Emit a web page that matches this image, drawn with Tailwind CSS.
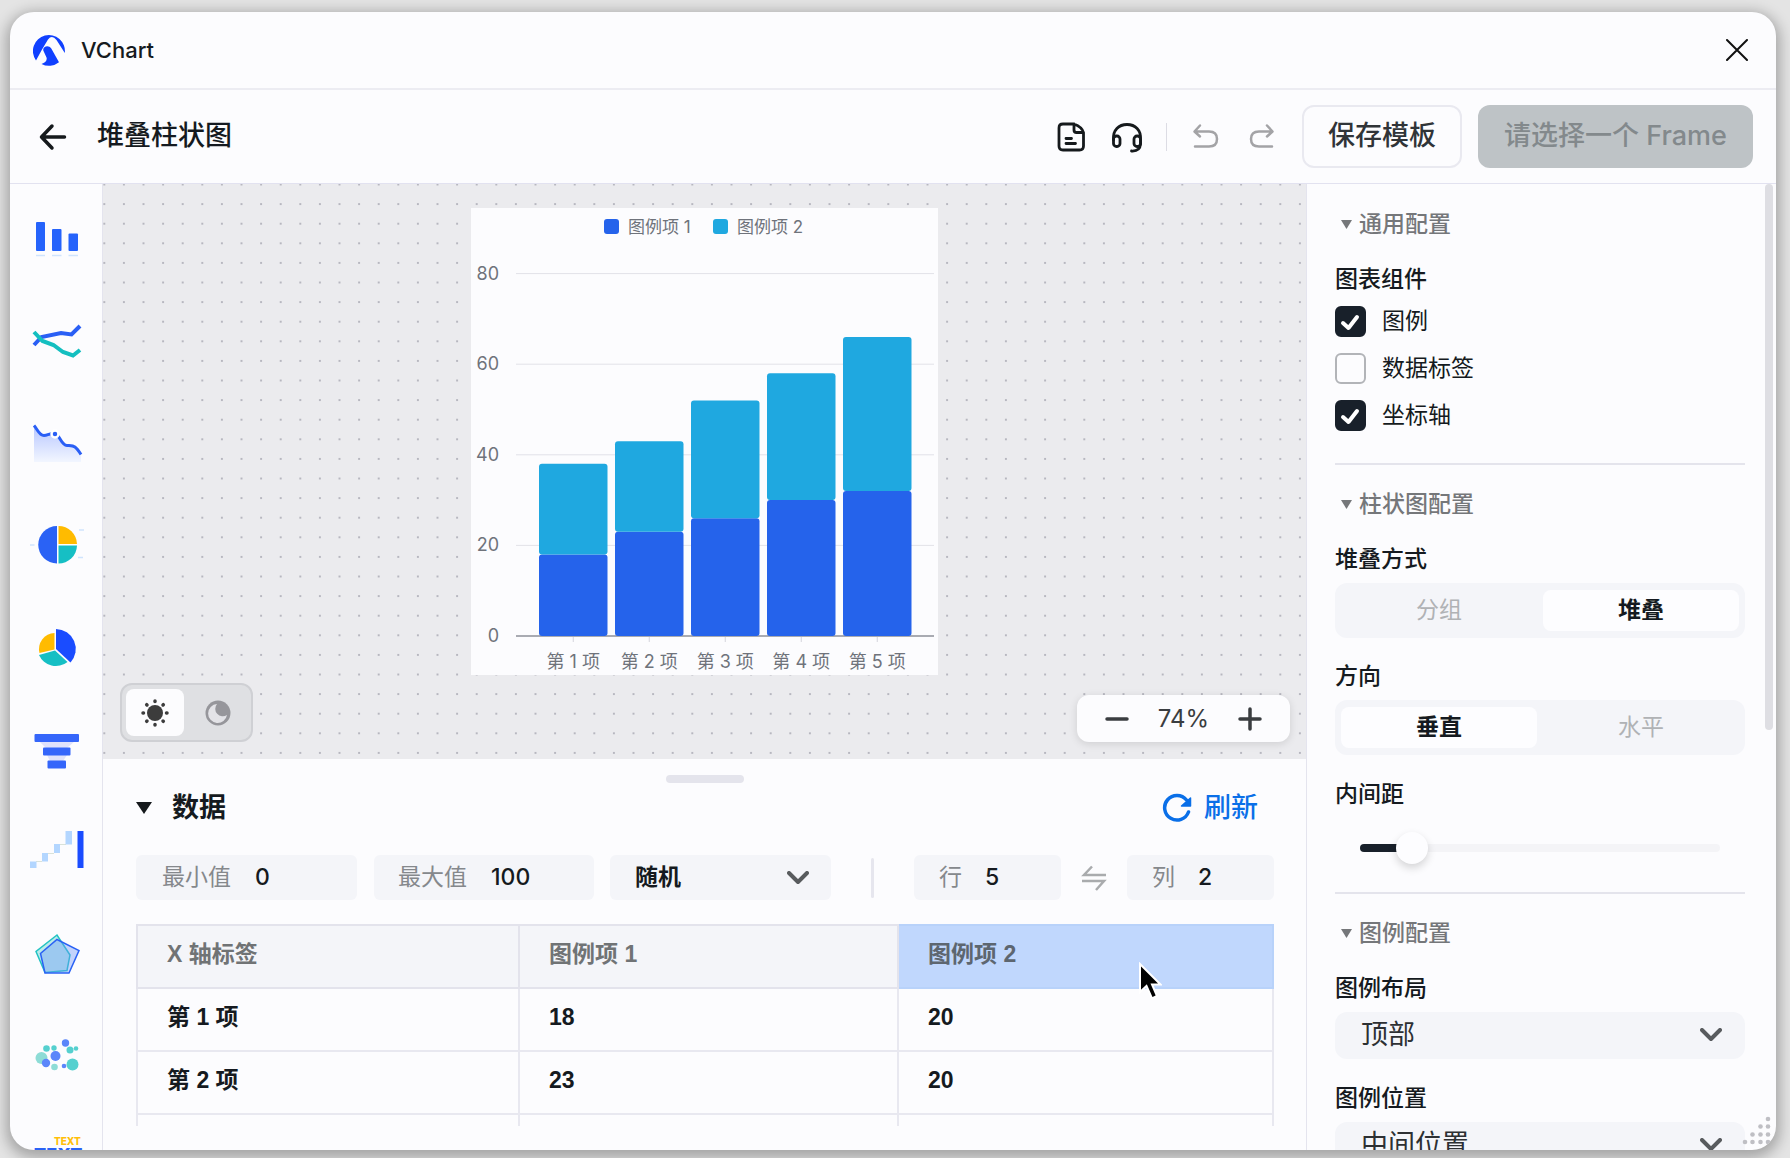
<!DOCTYPE html>
<html lang="zh-CN">
<head>
<meta charset="UTF-8">
<meta name="viewport" content="width=device-width, initial-scale=1.0">
<title>VChart</title>
<script src="https://cdn.jsdelivr.net/npm/@tailwindcss/browser@4"></script>
</head>
<body class="h-screen overflow-hidden bg-[#e4e4e4] pt-3 pr-[14px] pb-2 pl-[10px] font-['Inter','Noto_Sans_CJK_SC',sans-serif] text-[23px] text-[#151a20]">
<div class="flex h-full flex-col overflow-hidden rounded-3xl bg-[#fcfcfe] shadow-[0_4px_14px_4px_rgba(0,0,0,0.28)]">

  <!-- Title bar -->
  <header class="flex h-[78px] shrink-0 items-center border-b-2 border-[#ececf2] pr-7 pl-[23px]">
    <svg class="size-8" viewBox="0 0 32 32" fill="#1040ff">
      <path d="M3 26.5A16 16 0 1 1 31.8 19L23.5 6Q19 0.5 15 5.5L9 15.5Z"/>
      <path d="M10.3 16.5C9.5 12.5 15.5 10.5 18.3 14.5L26 28.3A16 16 0 0 1 8.5 30C12 29 14.5 26.5 13.5 23.5Z"/>
    </svg>
    <h1 class="ml-4 text-[22px] font-medium">VChart</h1>
    <button type="button" aria-label="关闭" class="ml-auto">
      <svg class="size-[22px]" viewBox="0 0 22 22" fill="none" stroke="#111" stroke-width="2" stroke-linecap="round"><path d="M1 1l20 20M21 1L1 21"/></svg>
    </button>
  </header>

  <!-- Toolbar -->
  <div class="flex h-[94px] shrink-0 items-center border-b border-[#e2e2f0] pr-[23px] pl-[29px]">
    <button type="button" aria-label="返回">
      <svg class="size-7" viewBox="0 0 28 28" fill="none" stroke="#15191c" stroke-width="3.500" stroke-linecap="round" stroke-linejoin="round"><path d="M13 3L2.500 14L13 25M3 14H25.500"/></svg>
    </button>
    <h2 class="ml-[30px] text-[27px] font-medium">堆叠柱状图</h2>
    <div class="ml-auto flex items-center">
      <button type="button" aria-label="文档">
        <svg class="size-8" viewBox="0 0 32 32" fill="none" stroke="#15191c" stroke-width="2.800" stroke-linecap="round" stroke-linejoin="round"><path d="M19 3H8Q4 3 4 7V25Q4 29 8 29H24.500Q28.500 29 28.500 25V11.500Q27 6 19 3V9Q19 11.500 21.500 11.500H28M11 17.500H16.500M11 22.500H20.500"/></svg>
      </button>
      <button type="button" aria-label="客服" class="ml-6">
        <svg class="size-8" viewBox="0 0 32 32" fill="none" stroke="#15191c" stroke-width="2.800" stroke-linecap="round" stroke-linejoin="round"><path d="M2.500 19C1.500 9 8 3.500 16 3.500S30.500 9 29.500 19V23Q29 30.500 20.500 30"/><rect x="2.500" y="15" width="6.500" height="10.500" rx="3"/><rect x="23" y="15" width="6.500" height="10.500" rx="3"/></svg>
      </button>
      <span class="ml-[23px] h-7 w-px bg-[#dcdce4]"></span>
      <button type="button" aria-label="撤销" class="ml-[23px]">
        <svg class="size-8" viewBox="0 0 32 32" fill="none" stroke="#a3a3a6" stroke-width="2.500" stroke-linecap="round" stroke-linejoin="round"><path d="M10 4.500L4.500 10.500L10 15.500M5 10.500H19Q27 10.500 27 18T19 25.500H5"/></svg>
      </button>
      <button type="button" aria-label="重做" class="ml-6">
        <svg class="size-8" viewBox="0 0 32 32" fill="none" stroke="#a3a3a6" stroke-width="2.500" stroke-linecap="round" stroke-linejoin="round"><path d="M21 4.500L26.500 10.500L21 15.500M26 10.500H13Q5 10.500 5 18T13 25.500H26"/></svg>
      </button>
      <button type="button" class="ml-6 h-[63px] w-[160px] rounded-xl border-2 border-[#e9e9f0] text-[27px] font-medium text-[#303438]">保存模板</button>
      <button type="button" disabled class="ml-4 h-[63px] w-[275px] rounded-xl bg-[#bec3c6] text-[27px] font-medium text-[#83898c]">请选择一个 Frame</button>
    </div>
  </div>

  <div class="flex min-h-0 flex-1">

    <!-- Chart types -->
    <nav class="w-[93px] shrink-0 overflow-hidden border-r border-[#e4e4ee] pt-1 pl-[2px]">
      <button type="button" aria-label="柱状图" class="flex h-[102px] w-full items-center justify-center">
        <svg class="size-14" viewBox="0 0 56 56"><g fill="#2563fb"><rect x="7" y="11" width="9" height="29" rx="1"/><rect x="23" y="18" width="9.500" height="22" rx="1"/><rect x="39.500" y="22.500" width="9.500" height="17.500" rx="1"/></g><path d="M7 44.500H16M23 44.500H32.500M39.500 44.500H49" stroke="#cfe4fd" stroke-width="1.500"/></svg>
      </button>
      <button type="button" aria-label="折线图" class="flex h-[102px] w-full items-center justify-center">
        <svg class="size-14" viewBox="0 0 56 56" fill="none" stroke-width="4"><path d="M5 32L12.500 24L32 20L42.500 21.500L51 13" stroke="#2a5ff5"/><path d="M5 19L13.500 28L24.500 32L34 39L44 42.500L51 37" stroke="#14bfc0"/></svg>
      </button>
      <button type="button" aria-label="面积图" class="flex h-[102px] w-full items-center justify-center">
        <svg class="size-14" viewBox="0 0 56 56">
          <defs><linearGradient id="areaFill" x1="0" y1="0" x2="0" y2="1"><stop offset="0" stop-color="#b9c8ff"/><stop offset="1" stop-color="#f2f6ff"/></linearGradient></defs>
          <path d="M5 12C9 17 10 21 15 21C20 21 20 18 26 18.500C31 20 32 30 38 30.500C46 31 46 30 52 40V47H5Z" fill="url(#areaFill)"/>
          <path d="M5 10.500C9 15 10 20.500 15 20.500C19 20.500 19 18.500 26 18.500C31 20 32 30 38 30.500C45 31 46 30 52 39.500" fill="none" stroke="#2a5ff5" stroke-width="3"/>
          <circle cx="26" cy="19" r="3.500" fill="#2a5ff5" stroke="#fff" stroke-width="2.500"/>
        </svg>
      </button>
      <button type="button" aria-label="饼图" class="flex h-[102px] w-full items-center justify-center">
        <svg class="size-14" viewBox="0 0 56 56"><path d="M28 9A18.700 18.700 0 0 0 28 46.500Z" fill="#2a62f5"/><path d="M29.500 9A18.500 18.500 0 0 1 48 27H29.500Z" fill="#ffbb00"/><path d="M29.500 28.500H48A18.500 18.500 0 0 1 29.500 46.500Z" fill="#16bfc4"/><path d="M1 28H5.500M50 13H55M49 40.500H54" stroke="#cfe4fd" stroke-width="1.500"/></svg>
      </button>
      <button type="button" aria-label="玫瑰图" class="flex h-[102px] w-full items-center justify-center">
        <svg class="size-14" viewBox="0 0 56 56"><path d="M27 10A20 20 0 0 1 41.500 43.500L27 30Z" fill="#1a4cff"/><path d="M25.500 14V30.500L10.500 34A16 16 0 0 1 25.500 14Z" fill="#ffbb00"/><path d="M26 31.500L38.500 43A18.500 18.500 0 0 1 10 36Z" fill="#16bfc4"/></svg>
      </button>
      <button type="button" aria-label="漏斗图" class="flex h-[102px] w-full items-center justify-center">
        <svg class="size-14" viewBox="0 0 56 56"><path d="M10 20H46L38 27H17ZM18 34H38L34 40H21Z" fill="#dfe2fb"/><g fill="#3566fa"><rect x="5.500" y="13" width="44.500" height="8" rx="1"/><rect x="14" y="26.500" width="27.500" height="8" rx="1"/><rect x="18.500" y="39.500" width="18.500" height="8" rx="1"/></g></svg>
      </button>
      <button type="button" aria-label="瀑布图" class="flex h-[102px] w-full items-center justify-center">
        <svg class="size-14" viewBox="0 0 56 56"><path d="M7 38.500H13M19 30.500H25M31 21.500H37" stroke="#d9e2d9" stroke-width="1"/><g fill="#b3d6ff"><rect x="1" y="38.500" width="6.500" height="6.500"/><rect x="13" y="30" width="6" height="8.500"/><rect x="25" y="21" width="6" height="9"/><rect x="36.500" y="8" width="6.500" height="13.500"/></g><rect x="48.500" y="8" width="6" height="37" fill="#1a4cff"/></svg>
      </button>
      <button type="button" aria-label="雷达图" class="flex h-[102px] w-full items-center justify-center">
        <svg class="size-14" viewBox="0 0 56 56" stroke-width="1.500"><path d="M28 10L7 26.500L16 47.500L38 45.500L41 30Z" fill="#8fe0dc" fill-opacity=".6" stroke="#22c3c3"/><path d="M28 14.500L50 25.500L40 48H16L11.500 28.500Z" fill="#6f96fb" fill-opacity=".4" stroke="#2a62f5"/></svg>
      </button>
      <button type="button" aria-label="散点图" class="flex h-[102px] w-full items-center justify-center">
        <svg class="size-14" viewBox="0 0 56 56"><g fill="#55d0cf"><circle cx="12.500" cy="31" r="6" fill="#8ddcd6"/><circle cx="17.500" cy="21.500" r="3.300"/><circle cx="25" cy="21" r="2.700"/><circle cx="41" cy="23" r="3.500"/><circle cx="47" cy="21.500" r="2.300"/><circle cx="43.500" cy="37.500" r="6"/><circle cx="25.500" cy="40" r="3.300" fill="#8ddcd6"/></g><g fill="#5b86fa"><circle cx="36.500" cy="16" r="3.700"/><circle cx="26.500" cy="29" r="5"/><circle cx="17" cy="36" r="4.200"/><circle cx="35" cy="39" r="2.300"/></g></svg>
      </button>
      <button type="button" aria-label="词云" class="flex h-[102px] w-full items-center justify-center">
        <svg class="size-14" viewBox="0 0 56 56" font-family="Inter, sans-serif" font-weight="800"><text x="25" y="16" font-size="10" fill="#ffbf0a">TEXT</text><text x="5" y="32" font-size="18" fill="#2a62f5">TEXT</text></svg>
      </button>
    </nav>

    <main class="flex min-w-0 flex-1 flex-col">
      <!-- Canvas -->
      <section class="relative min-h-0 flex-1 bg-[#ebebee] pt-6">
        <svg class="absolute inset-0 size-full">
          <defs><pattern id="dots" x="-8.500" y="-9.300" width="19.600" height="19.600" patternUnits="userSpaceOnUse"><circle cx="9.800" cy="9.800" r="1" fill="#a6a6b0"/></pattern></defs>
          <rect width="100%" height="100%" fill="url(#dots)"/>
        </svg>
        <svg class="relative mx-auto size-[467px] bg-[#fcfcfe]" viewBox="0 0 467 467" font-family="Inter, 'Noto Sans CJK SC', sans-serif" font-size="18" fill="#6f737b">
          <rect x="133" y="11" width="15" height="15" rx="3" fill="#2563eb"/>
          <text x="157" y="25" font-size="17">图例项 1</text>
          <rect x="242" y="11" width="15" height="15" rx="3" fill="#1fa8e0"/>
          <text x="266" y="25" font-size="17">图例项 2</text>
          <g id="plot"></g>
        </svg>

        <div class="absolute bottom-[17px] left-[17px] flex h-[59px] w-[133px] rounded-xl border-2 border-[#cfd0d4] bg-[#dfe0e3] p-1">
          <button type="button" aria-label="浅色" class="flex w-[58px] items-center justify-center rounded-lg bg-[#fcfcfe]">
            <svg class="size-7" viewBox="0 0 28 28" fill="#3c3c3c" stroke="#3c3c3c" stroke-width="3.500" stroke-linecap="round"><circle cx="14" cy="14" r="8" stroke="none"/><path d="M14 2V2.500M14 25.500V26M2 14H2.500M25.500 14H26M5.700 5.700L6 6M22 22L22.300 22.300M5.700 22.300L6 22M22 6L22.300 5.700"/></svg>
          </button>
          <button type="button" aria-label="深色" class="flex flex-1 items-center justify-center pl-1">
            <svg class="size-[26px]" viewBox="0 0 26 26"><circle cx="13" cy="13" r="12.500" fill="#96969b"/><path d="M12 4A9.500 9.500 0 1 0 22 15A7.500 7.500 0 0 1 12 4Z" fill="#e3e3e7"/></svg>
          </button>
        </div>

        <div class="absolute right-4 bottom-[17px] flex h-[47px] w-[213px] items-center justify-between rounded-xl bg-[#fcfcfe] px-7 text-2xl text-[#3a3d40] shadow-[0_2px_8px_rgba(0,0,0,0.12)]">
          <button type="button" aria-label="缩小"><svg class="size-6" viewBox="0 0 24 24" stroke="#3a3d40" stroke-width="3.500" stroke-linecap="round"><path d="M2 12H22"/></svg></button>
          <span>74%</span>
          <button type="button" aria-label="放大"><svg class="size-6" viewBox="0 0 24 24" stroke="#3a3d40" stroke-width="3.500" stroke-linecap="round"><path d="M2 12H22M12 2V22"/></svg></button>
        </div>
      </section>

      <!-- Data -->
      <section class="h-[391px] shrink-0 pr-8 pl-[33px]">
        <div class="pt-4"><div class="mx-auto h-2 w-[78px] rounded-full bg-[#e4e4ec]"></div></div>
        <div class="mt-[5px] flex h-10 items-center">
          <button type="button" class="flex items-center text-[27px] font-bold">
            <svg class="mr-5 h-3 w-4" viewBox="0 0 16 12" fill="#15191c"><path d="M0 0H16L8 12Z"/></svg>数据
          </button>
          <button type="button" class="mr-4 ml-auto flex items-center gap-3 text-[27px] font-medium text-[#0a6fe8]">
            <svg class="size-[30px]" viewBox="0 0 30 30" fill="none" stroke="#0a6fe8" stroke-width="3.500" stroke-linecap="round"><path d="M26.500 19A12.300 12.300 0 1 1 24.500 7"/><path d="M28.500 5V13H19.500Z" fill="#0a6fe8" stroke-width="1.500" stroke-linejoin="round"/></svg>刷新
          </button>
        </div>
        <div class="mt-[27px] flex h-[45px] items-center">
          <label class="flex h-full w-[221px] items-center rounded-md bg-[#f4f5f9] pl-[26px] text-[#85888c]">最小值<input type="text" value="0" class="ml-6 w-20 font-medium text-[#151a20] outline-none"></label>
          <label class="ml-[17px] flex h-full w-[220px] items-center rounded-md bg-[#f4f5f9] pl-6 text-[#85888c]">最大值<input type="text" value="100" class="ml-6 w-20 font-medium text-[#151a20] outline-none"></label>
          <div class="relative ml-4 h-full w-[221px]">
            <select aria-label="生成方式" class="h-full w-full appearance-none rounded-md bg-[#f4f5f9] pl-[25px] font-bold"><option>随机</option></select>
            <svg class="pointer-events-none absolute top-4 right-[22px] h-[14px] w-[22px]" viewBox="0 0 22 14" fill="none" stroke="#585b5e" stroke-width="4" stroke-linecap="round" stroke-linejoin="round"><path d="M2 2L11 11L20 2"/></svg>
          </div>
          <span class="mx-auto h-10 w-[3px] rounded-full bg-[#e6e6ee]"></span>
          <label class="flex h-full w-[147px] items-center rounded-md bg-[#f4f5f9] pl-[25px] text-[#85888c]">行<input type="text" value="5" class="ml-[23px] w-12 font-medium text-[#151a20] outline-none"></label>
          <button type="button" aria-label="行列转置" class="mx-5">
            <svg class="size-[26px]" viewBox="0 0 26 26" fill="none" stroke="#a9abad" stroke-width="2.500"><path d="M25 10H3L11 1.500M1 16H23L15 25"/></svg>
          </button>
          <label class="flex h-full w-[147px] items-center rounded-md bg-[#f4f5f9] pl-[25px] text-[#85888c]">列<input type="text" value="2" class="ml-[23px] w-12 font-medium text-[#151a20] outline-none"></label>
        </div>
        <div class="mt-6 h-[202px] overflow-hidden">
          <table class="w-full table-fixed border-collapse font-['Liberation_Sans','Noto_Sans_CJK_SC',sans-serif] text-left font-bold">
            <thead>
              <tr class="h-[63px] text-[#707375]">
                <th class="w-[382px] border-2 border-[#e3e3ec] bg-[#f4f5f9] px-[29px] pb-1">X 轴标签</th>
                <th class="w-[379px] border-2 border-[#e3e3ec] bg-[#f4f5f9] px-[29px] pb-1">图例项 1</th>
                <th class="relative border-2 border-[#b8d2fa] bg-[#c0d7fd] px-[29px] pb-1 text-[#5d6670]">图例项 2
                  <svg class="absolute top-9 left-[239px] z-10 h-10 w-6" viewBox="0 0 24 40"><path d="M2 2V30L8.500 24L14 36.500L19 34L14 22.500H22.500Z" fill="#000" stroke="#fff" stroke-width="2"/></svg>
                </th>
              </tr>
            </thead>
            <tbody id="rows"></tbody>
          </table>
        </div>
      </section>
    </main>

    <!-- Settings -->
    <aside class="relative w-[470px] shrink-0 overflow-hidden border-l border-[#e4e4ee] pt-[22px] pr-[31px] pl-7">
      <div class="absolute top-0 right-[3px] h-[546px] w-2 rounded-full bg-[#dedee3]"></div>

      <section>
        <h3 class="flex h-9 items-center gap-[7px] pl-[6px] font-medium text-[#75777a]"><svg class="h-[9px] w-[11px]" viewBox="0 0 11 9" fill="#75777a"><path d="M0 0H11L5.500 9Z"/></svg>通用配置</h3>
        <fieldset class="mt-[19px]">
          <legend class="h-9 leading-9 font-medium">图表组件</legend>
          <div class="flex flex-col gap-4 pt-[9px]">
            <label class="flex h-[31px] items-center gap-4">
              <span class="grid size-[31px]">
                <input type="checkbox" checked class="peer col-start-1 row-start-1 size-[31px] appearance-none rounded-md border-2 border-[#b2b4b8] checked:border-[#18202a] checked:bg-[#18202a]">
                <svg class="pointer-events-none invisible col-start-1 row-start-1 size-[31px] peer-checked:visible" viewBox="0 0 31 31" fill="none" stroke="#fff" stroke-width="4" stroke-linecap="round" stroke-linejoin="round"><path d="M8 17L13.500 22L22 11"/></svg>
              </span>图例
            </label>
            <label class="flex h-[31px] items-center gap-4">
              <span class="grid size-[31px]">
                <input type="checkbox" class="peer col-start-1 row-start-1 size-[31px] appearance-none rounded-md border-2 border-[#b2b4b8] checked:border-[#18202a] checked:bg-[#18202a]">
                <svg class="pointer-events-none invisible col-start-1 row-start-1 size-[31px] peer-checked:visible" viewBox="0 0 31 31" fill="none" stroke="#fff" stroke-width="4" stroke-linecap="round" stroke-linejoin="round"><path d="M8 17L13.500 22L22 11"/></svg>
              </span>数据标签
            </label>
            <label class="flex h-[31px] items-center gap-4">
              <span class="grid size-[31px]">
                <input type="checkbox" checked class="peer col-start-1 row-start-1 size-[31px] appearance-none rounded-md border-2 border-[#b2b4b8] checked:border-[#18202a] checked:bg-[#18202a]">
                <svg class="pointer-events-none invisible col-start-1 row-start-1 size-[31px] peer-checked:visible" viewBox="0 0 31 31" fill="none" stroke="#fff" stroke-width="4" stroke-linecap="round" stroke-linejoin="round"><path d="M8 17L13.500 22L22 11"/></svg>
              </span>坐标轴
            </label>
          </div>
        </fieldset>
      </section>

      <section class="mt-8 border-t-2 border-[#e4e4ec] pt-[21px]">
        <h3 class="flex h-9 items-center gap-[7px] pl-[6px] font-medium text-[#75777a]"><svg class="h-[9px] w-[11px]" viewBox="0 0 11 9" fill="#75777a"><path d="M0 0H11L5.500 9Z"/></svg>柱状图配置</h3>
        <h4 class="mt-[19px] h-9 leading-9 font-medium">堆叠方式</h4>
        <div class="mt-[6px] flex h-[55px] justify-between rounded-xl bg-[#f4f5f9] px-[6px] py-[7px]">
          <button type="button" class="w-[196px] rounded-lg text-[#b0b2b5]">分组</button>
          <button type="button" class="w-[196px] rounded-lg bg-[#fdfdff] font-bold">堆叠</button>
        </div>
        <h4 class="mt-5 h-9 leading-9 font-medium">方向</h4>
        <div class="mt-[6px] flex h-[55px] justify-between rounded-xl bg-[#f4f5f9] px-[6px] py-[7px]">
          <button type="button" class="w-[196px] rounded-lg bg-[#fdfdff] font-bold">垂直</button>
          <button type="button" class="w-[196px] rounded-lg text-[#b0b2b5]">水平</button>
        </div>
        <label for="padding" class="mt-[21px] block h-9 leading-9 font-medium">内间距</label>
        <div class="mt-5 flex h-8 items-center px-[25px]">
          <input id="padding" type="range" min="0" max="100" value="11" class="h-2 w-full appearance-none rounded-full bg-[linear-gradient(to_right,#18202a_38px,#f4f4f7_38px)] [&::-webkit-slider-thumb]:size-8 [&::-webkit-slider-thumb]:appearance-none [&::-webkit-slider-thumb]:rounded-full [&::-webkit-slider-thumb]:bg-[#fdfdff] [&::-webkit-slider-thumb]:shadow-[0_4px_8px_rgba(0,0,0,0.16)]">
        </div>
      </section>

      <section class="mt-7 border-t-2 border-[#e4e4ec] pt-[21px]">
        <h3 class="flex h-9 items-center gap-[7px] pl-[6px] font-medium text-[#75777a]"><svg class="h-[9px] w-[11px]" viewBox="0 0 11 9" fill="#75777a"><path d="M0 0H11L5.500 9Z"/></svg>图例配置</h3>
        <label for="layout" class="mt-[19px] block h-9 leading-9 font-medium">图例布局</label>
        <div class="relative mt-[6px] h-[47px]">
          <select id="layout" class="h-full w-full appearance-none rounded-xl bg-[#f4f5f9] pl-[26px] text-[27px] text-[#2d3033]"><option>顶部</option></select>
          <svg class="pointer-events-none absolute top-4 right-[23px] h-[14px] w-[22px]" viewBox="0 0 22 14" fill="none" stroke="#585b5e" stroke-width="4" stroke-linecap="round" stroke-linejoin="round"><path d="M2 2L11 11L20 2"/></svg>
        </div>
        <label for="position" class="mt-[21px] block h-9 leading-9 font-medium">图例位置</label>
        <div class="relative mt-[6px] h-[47px]">
          <select id="position" class="h-full w-full appearance-none rounded-xl bg-[#f4f5f9] pl-[26px] text-[27px] text-[#2d3033]"><option>中间位置</option></select>
          <svg class="pointer-events-none absolute top-4 right-[23px] h-[14px] w-[22px]" viewBox="0 0 22 14" fill="none" stroke="#585b5e" stroke-width="4" stroke-linecap="round" stroke-linejoin="round"><path d="M2 2L11 11L20 2"/></svg>
        </div>
      </section>

      <!-- resize grip -->
      <svg class="absolute right-0 bottom-0 size-9" viewBox="0 0 36 36" fill="#bfbfc4"><circle cx="28" cy="5" r="2.300"/><circle cx="20.500" cy="12.500" r="2.300"/><circle cx="28" cy="12.500" r="2.300"/><circle cx="12.500" cy="20.500" r="2.300"/><circle cx="20.500" cy="20.500" r="2.300"/><circle cx="28" cy="20.500" r="2.300"/><circle cx="5" cy="28" r="2.300"/><circle cx="12.500" cy="28" r="2.300"/><circle cx="20.500" cy="28" r="2.300"/><circle cx="28" cy="28" r="2.300"/></svg>
    </aside>
  </div>
</div>

<script>
const data = [
  { label: '第 1 项', values: [18, 20] },
  { label: '第 2 项', values: [23, 20] },
  { label: '第 3 项', values: [26, 26] },
  { label: '第 4 项', values: [30, 28] },
  { label: '第 5 项', values: [32, 34] }
];

// plot geometry inside the 467x467 chart
const zeroY = 428;
const unit = 4.53;
const barX = 68;
const barStep = 76;
const barWidth = 68.5;

function drawPlot() {
  let out = '';
  [0, 20, 40, 60, 80].forEach(v => {
    const y = zeroY - v * unit;
    out += `<path d="M45 ${y}H463" stroke="${v ? '#e2e2e8' : '#8e9098'}" stroke-width="${v ? 1 : 1.5}"/>`;
    out += `<text x="28" y="${y + 6}" text-anchor="end">${v}</text>`;
  });
  data.forEach((d, i) => {
    const x = barX + i * barStep;
    const mid = x + barWidth / 2;
    const h1 = d.values[0] * unit;
    const h2 = d.values[1] * unit;
    out += `<rect x="${x}" y="${zeroY - h1}" width="${barWidth}" height="${h1}" rx="3" fill="#2563eb"/>`;
    out += `<rect x="${x}" y="${zeroY - h1 - h2}" width="${barWidth}" height="${h2}" rx="3" fill="#1fa8e0"/>`;
    out += `<path d="M${mid} ${zeroY + 1}v5" stroke="#d4d4dc"/>`;
    out += `<text x="${mid}" y="460" text-anchor="middle">${d.label}</text>`;
  });
  document.getElementById('plot').innerHTML = out;
}

function drawRows() {
  document.getElementById('rows').innerHTML = data.map(d => `
    <tr class="h-[63px]">
      <td class="border-2 border-[#e8e8f0] px-[29px] pb-1">${d.label}</td>
      <td class="border-2 border-[#e8e8f0] px-[29px] pb-1">${d.values[0]}</td>
      <td class="border-2 border-[#e8e8f0] px-[29px] pb-1">${d.values[1]}</td>
    </tr>`).join('');
}

drawPlot();
drawRows();
</script>
</body>
</html>
